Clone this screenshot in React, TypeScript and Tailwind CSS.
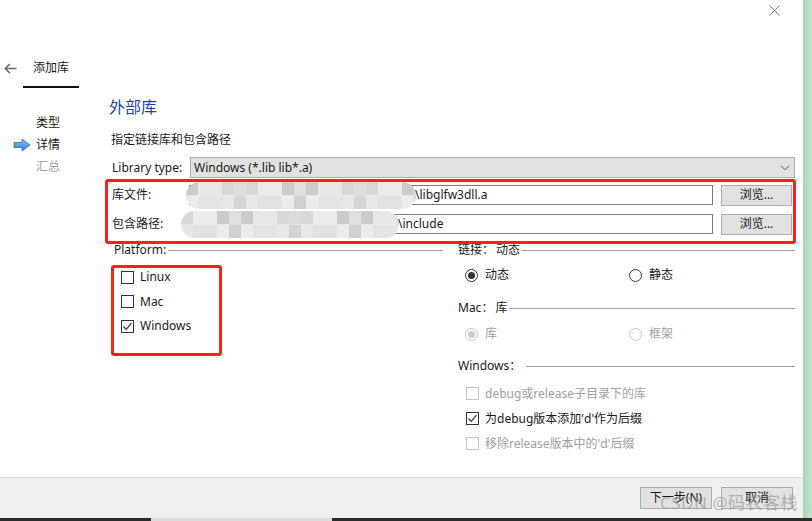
import React from "react";

const FONT = { fontFamily: '"Noto Sans", "Noto Sans CJK SC", sans-serif' };

function Mosaic({ w, h, seed }: { w: number; h: number; seed: number }) {
  const shades = ["#d8d8d8", "#e2e2e2", "#d0d0d0", "#e8e8e8", "#dcdcdc", "#cbcbcb", "#e5e5e5", "#d4d4d4", "#ececec", "#dfdfdf"];
  const cols = Math.ceil(w / 12);
  const rects: React.ReactElement[] = [];
  for (let r = 0; r < 2; r++) {
    for (let c = 0; c < cols; c++) {
      const i = (c * 7 + r * 3 + seed * 5 + ((c * c) % 5)) % shades.length;
      rects.push(<rect key={`${r}-${c}`} x={c * 12} y={r * (h / 2)} width={12} height={h / 2} fill={shades[i]} />);
    }
  }
  return (
    <svg width={w} height={h} className="block">
      <defs>
        <clipPath id={`m${seed}`}>
          <rect x={0} y={0} width={w} height={h} rx={h / 2} />
        </clipPath>
      </defs>
      <g clipPath={`url(#m${seed})`}>{rects}</g>
    </svg>
  );
}

function Checkbox({ checked, disabled }: { checked?: boolean; disabled?: boolean }) {
  return (
    <span
      className={`w-[13px] h-[13px] border bg-white flex items-center justify-center shrink-0 ${
        disabled ? "border-[#c6c6c6]" : "border-[#333333]"
      }`}
    >
      {checked && (
        <svg width="11" height="11" viewBox="0 0 11 11">
          <path d="M1.5 5.5 L4.2 8.3 L9.5 2.2" fill="none" stroke="#333" strokeWidth="1.2" />
        </svg>
      )}
    </span>
  );
}

function Radio({ checked, disabled }: { checked?: boolean; disabled?: boolean }) {
  return (
    <span
      className={`w-[13px] h-[13px] rounded-full border bg-white flex items-center justify-center shrink-0 ${
        disabled ? "border-[#c6c6c6]" : "border-[#333333]"
      }`}
    >
      {checked && <span className={`w-[7px] h-[7px] rounded-full ${disabled ? "bg-[#cccccc]" : "bg-[#333333]"}`} />}
    </span>
  );
}

function GroupHeader({ children }: { children: React.ReactNode }) {
  return (
    <div className="flex items-center h-[16px]">
      <span className="whitespace-nowrap">{children}</span>
      <span className="flex-1 h-px bg-[#a0a0a0] ml-[2px]" />
    </div>
  );
}

export default function App() {
  return (
    <div className="w-[812px] h-[521px] flex flex-col overflow-hidden bg-[#2b2b2b] text-[12px] text-[#1a1a1a]" style={FONT}>
      <div className="flex h-[518px]">
        <div className="w-[803px] flex flex-col bg-white relative">
          <div className="flex-1 flex flex-col">
            {/* close */}
            <div className="h-[58px] flex justify-end pt-[5px] pr-[23px]">
              <svg width="11" height="11" viewBox="0 0 11 11">
                <path d="M0.5 0.5 L10.5 10.5 M10.5 0.5 L0.5 10.5" stroke="#7a7a7a" strokeWidth="1" />
              </svg>
            </div>
            {/* tab */}
            <div className="flex items-center h-[20px]">
              <svg width="13" height="11" viewBox="0 0 13 11" className="ml-[4px]">
                <path d="M12.5 5.5 H1.5 M5.8 1 L1.3 5.5 L5.8 10" fill="none" stroke="#6a6a6a" strokeWidth="1.6" />
              </svg>
              <span className="ml-[16px] text-[12px] text-[#1a1a1a]">添加库</span>
            </div>
            <div className="ml-[23px] w-[56px] h-[2px] bg-[#111] mt-[8px]" />
            {/* body */}
            <div className="flex flex-1">
              <div className="w-[109px] pt-[24px] flex flex-col">
                <div className="h-[22px] flex items-center pl-[36px]">类型</div>
                <div className="h-[22px] flex items-center pl-[13px]">
                  <svg width="18" height="14" viewBox="0 0 18 14">
                    <defs>
                      <linearGradient id="ag" x1="0" y1="0" x2="0" y2="1">
                        <stop offset="0" stopColor="#8fc3f3" />
                        <stop offset="1" stopColor="#2f7bd6" />
                      </linearGradient>
                    </defs>
                    <path d="M1 4.5 H9 V1 L17 7 L9 13 V9.5 H1 Z" fill="url(#ag)" stroke="#2a6cc0" strokeWidth="0.8" />
                  </svg>
                  <span className="ml-[5px]">详情</span>
                </div>
                <div className="h-[22px] flex items-center pl-[36px] text-[#a0a0a0]">汇总</div>
              </div>
              <div className="w-[686px] flex flex-col relative">
                <div className="mt-[8px] h-[22px] flex items-center text-[16px] text-[#1f3fa6]">外部库</div>
                <div className="mt-[13px] h-[18px] flex items-center pl-[2px]">指定链接库和包含路径</div>
                <div className="mt-[8px] flex items-center h-[21px]">
                  <span className="w-[81px] pl-[3px]">Library type:</span>
                  <div className="flex-1 h-[21px] bg-[#e1e1e1] border border-[#adadad] flex items-center pl-[3px] pr-[4px]">
                    <span className="flex-1">Windows (*.lib lib*.a)</span>
                    <svg width="10" height="6" viewBox="0 0 10 6">
                      <path d="M1 0.8 L5 4.8 L9 0.8" fill="none" stroke="#555" strokeWidth="1" />
                    </svg>
                  </div>
                </div>
                <div className="mt-[7px] flex items-center h-[20px]">
                  <span className="w-[80px] pl-[3px]">库文件:</span>
                  <div className="w-[524px] h-[20px] border border-[#7a7a7a] bg-white flex items-center relative">
                    <div className="-ml-[4px] -my-[4px]">
                      <Mosaic w={230} h={27} seed={1} />
                    </div>
                    <span className="ml-[-1px]">\libglfw3dll.a</span>
                  </div>
                  <div className="ml-[8px] w-[71px] h-[21px] bg-[#e1e1e1] border border-[#adadad] flex items-center justify-center">浏览...</div>
                </div>
                <div className="mt-[9px] flex items-center h-[20px]">
                  <span className="w-[80px] pl-[3px]">包含路径:</span>
                  <div className="w-[524px] h-[20px] border border-[#7a7a7a] bg-white flex items-center">
                    <div className="-ml-[9px] -my-[4px]">
                      <Mosaic w={218} h={27} seed={2} />
                    </div>
                    <span className="ml-[-1px]">\include</span>
                  </div>
                  <div className="ml-[8px] w-[71px] h-[21px] bg-[#e1e1e1] border border-[#adadad] flex items-center justify-center">浏览...</div>
                </div>
                <div className="mt-[8px] flex gap-[15px]">
                  <div className="w-[334px] flex flex-col">
                    <div className="pl-[5px]">
                      <GroupHeader>Platform:</GroupHeader>
                    </div>
                    <div className="mt-[7px] pl-[12px] flex flex-col">
                      {[
                        ["Linux", false],
                        ["Mac", false],
                        ["Windows", true],
                      ].map(([t, c]) => (
                        <div key={t as string} className="h-[24.5px] flex items-center gap-[6px]">
                          <Checkbox checked={c as boolean} />
                          <span>{t as string}</span>
                        </div>
                      ))}
                    </div>
                  </div>
                  <div className="w-[337px] flex flex-col">
                    <GroupHeader>
                      链接：<span className="ml-[2px]">动态</span>
                    </GroupHeader>
                    <div className="mt-[9px] flex h-[16px] items-center pl-[7px]">
                      <div className="w-[164px] flex items-center gap-[7px]">
                        <Radio checked />
                        <span>动态</span>
                      </div>
                      <div className="flex items-center gap-[7px]">
                        <Radio />
                        <span>静态</span>
                      </div>
                    </div>
                    <div className="mt-[17px]">
                      <GroupHeader>
                        Mac：<span className="ml-[2px]">库</span>
                      </GroupHeader>
                    </div>
                    <div className="mt-[10px] flex h-[16px] items-center pl-[7px] text-[#a0a0a0]">
                      <div className="w-[164px] flex items-center gap-[7px]">
                        <Radio checked disabled />
                        <span>库</span>
                      </div>
                      <div className="flex items-center gap-[7px]">
                        <Radio disabled />
                        <span>框架</span>
                      </div>
                    </div>
                    <div className="mt-[16px]">
                      <GroupHeader>
                        <span className="inline-block w-[66px]">Windows：</span>
                      </GroupHeader>
                    </div>
                    <div className="mt-[7px] pl-[8px] flex flex-col">
                      <div className="h-[25px] flex items-center gap-[6px] text-[#a0a0a0]">
                        <Checkbox disabled />
                        <span>debug或release子目录下的库</span>
                      </div>
                      <div className="h-[25px] flex items-center gap-[6px]">
                        <Checkbox checked />
                        <span>为debug版本添加'd'作为后缀</span>
                      </div>
                      <div className="h-[25px] flex items-center gap-[6px] text-[#a0a0a0]">
                        <Checkbox disabled />
                        <span>移除release版本中的'd'后缀</span>
                      </div>
                    </div>
                  </div>
                </div>
                {/* annotation boxes */}
                <div className="absolute left-[-4px] top-[91px] w-[691px] h-[65px] border-[3px] border-[#ff1f1f] rounded-[3px]" />
                <div className="absolute left-[2px] top-[177px] w-[111px] h-[91px] border-[3px] border-[#ff1f1f] rounded-[3px]" />
              </div>
            </div>
          </div>
          <div className="h-[41px] bg-[#f0f0f0] border-t border-[#dadada] flex justify-end items-start pt-[9px] pr-[10px] gap-[9px] relative">
            <div className="w-[72px] h-[22px] bg-[#e1e1e1] border border-[#adadad] flex items-center justify-center">下一步(N)</div>
            <div className="w-[72px] h-[22px] bg-[#e1e1e1] border border-[#adadad] flex items-center justify-center">取消</div>
            <div className="absolute left-[660px] top-[12px] text-[17px] text-[#9a9a9a]/70 whitespace-nowrap tracking-[0.5px] pointer-events-none">CSDN @码农客栈</div>
          </div>
        </div>
        <div className="w-[9px] bg-gradient-to-r from-[#a9d5b6] to-[#c5e4cd]" />
      </div>
      <div className="h-[3px] flex">
        <div className="w-[151px] bg-[#2b2b2b]" />
        <div className="w-[181px] bg-[#dcdcdc]" />
        <div className="flex-1 bg-[#2b2b2b]" />
      </div>
    </div>
  );
}
